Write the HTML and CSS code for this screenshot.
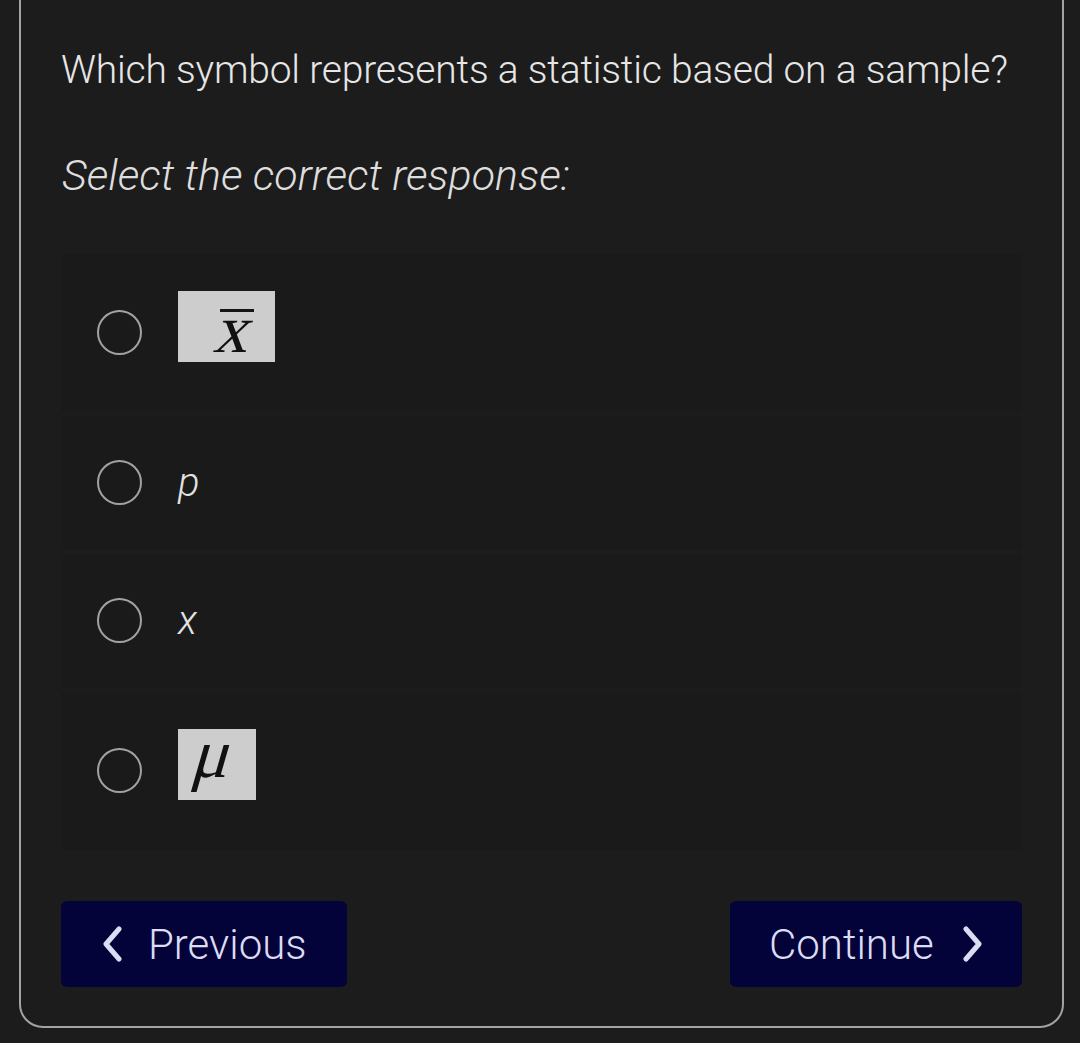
FILE: index.html
```html
<!DOCTYPE html>
<html>
<head>
<meta charset="utf-8">
<link rel="stylesheet" href="styles.css">
</head>
<body>
<div class="card">
  <p class="question">Which symbol represents a statistic based on a sample?</p>
  <p class="instruction">Select the correct response:</p>
  <div class="options">
    <div class="option">
      <span class="radio"></span>
      <span class="img-box img-xbar"><span class="xbar">x</span></span>
    </div>
    <div class="option">
      <span class="radio"></span>
      <span class="label">p</span>
    </div>
    <div class="option">
      <span class="radio"></span>
      <span class="label">x</span>
    </div>
    <div class="option">
      <span class="radio"></span>
      <span class="img-box img-mu"><span class="mu">μ</span></span>
    </div>
  </div>
  <div class="nav">
    <button class="btn btn-prev">
      <svg class="chev" width="22" height="36" viewBox="0 0 22 36"><path d="M18 3 L5 18 L18 33" fill="none" stroke="currentColor" stroke-width="5" stroke-linecap="round" stroke-linejoin="round"/></svg>
      <span>Previous</span>
    </button>
    <button class="btn btn-next">
      <span>Continue</span>
      <svg class="chev" width="22" height="36" viewBox="0 0 22 36"><path d="M4 3 L17 18 L4 33" fill="none" stroke="currentColor" stroke-width="5" stroke-linecap="round" stroke-linejoin="round"/></svg>
    </button>
  </div>
</div>
</body>
</html>
```
FILE: styles.css
```css
html, body {
  margin: 0;
  padding: 0;
  background: #1c1c1c;
  height: 1043px;
  overflow: hidden;
}

body {
  font-family: Roboto, "Liberation Sans", sans-serif;
  color: #e2e2e2;
}

.card {
  margin: -20px 16px 0 19px;
  border: 2px solid #a3a3a3;
  border-radius: 0 0 24px 24px;
  padding: 64px 40px 39px 40px;
  background: #1c1c1c;
}

.question {
  margin: 0;
  font-size: 39px;
  letter-spacing: -0.2px;
  font-weight: 300;
  line-height: 48px;
  color: #e6e6e6;
  white-space: nowrap;
}

.instruction {
  margin: 56px 0 0 1px;
  font-size: 43px;
  font-weight: 300;
  font-style: italic;
  line-height: 50px;
  color: #dedede;
}

.options {
  margin-top: 54px;
  display: flex;
  flex-direction: column;
  gap: 4px;
}

.option {
  display: flex;
  align-items: center;
  padding: 43px 36px 44px;
  background: #1a1a1a;
}

.radio {
  width: 41px;
  height: 41px;
  border: 2.5px solid #a2a2a2;
  border-radius: 50%;
  flex: none;
  margin-right: 36px;
}

.label {
  font-size: 40px;
  font-weight: 300;
  font-style: italic;
  color: #e2e2e2;
  line-height: 47px;
  height: 47px;
}

.img-box {
  background: #cdcdcd;
  height: 71px;
  margin: -6px 0 6px 0;
  display: flex;
  align-items: flex-start;
  color: #111;
  font-family: "Liberation Serif", serif;
  position: relative;
}

.img-xbar {
  width: 97px;
}

.img-xbar::before {
  content: "";
  position: absolute;
  left: 42px;
  top: 18px;
  width: 34px;
  height: 3px;
  background: #151515;
}

.xbar {
  display: block;
  font-size: 68px;
  line-height: 60px;
  margin: 8px 0 0 41px;
  transform: skewX(-16deg);
}

.img-mu {
  width: 78px;
}

.mu {
  display: block;
  font-size: 70px;
  line-height: 60px;
  margin: -5px 0 0 18px;
  transform: skewX(-16deg);
}

.nav {
  margin-top: 51px;
  display: flex;
  justify-content: space-between;
}

.btn {
  height: 86px;
  border: none;
  border-radius: 6px;
  background: #03033a;
  color: #dcdcf2;
  font-family: Roboto, "Liberation Sans", sans-serif;
  font-size: 42px;
  font-weight: 300;
  display: flex;
  align-items: center;
  gap: 25px;
  padding: 0;
}

.btn-prev {
  width: 286px;
  padding-left: 40px;
}

.btn-next {
  width: 292px;
  padding-left: 39px;
  gap: 28px;
}

.chev {
  flex: none;
}
```
